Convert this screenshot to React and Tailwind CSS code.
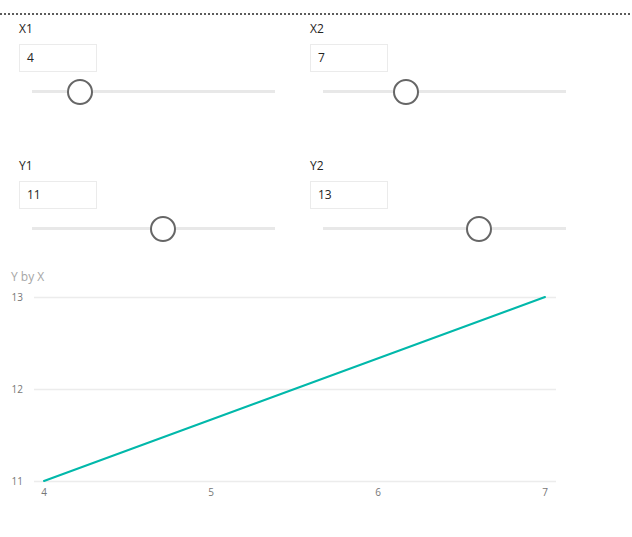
import React from "react";

const TRACK_W = 243;

function Slicer({ label, value, pos }) {
  return (
    <div className="flex flex-col w-[256px]">
      <div className="h-[16px] text-[12px] leading-[16px] text-[#252423]">{label}</div>
      <div className="mt-[7px] w-[78px] h-[28px] border border-[#ebebeb] flex items-center pl-[7px] text-[12px] text-[#252423]">
        {value}
      </div>
      <div className="relative ml-[13px] mt-[6px] h-[28px]" style={{ width: TRACK_W }}>
        <div className="absolute left-0 right-0 top-[12px] h-[3px] bg-[#e8e8e8]" />
        <div
          className="absolute top-[1px] w-[26px] h-[26px] rounded-full border-2 border-[#666666] bg-white"
          style={{ left: pos - 13 }}
        />
      </div>
    </div>
  );
}

function Chart() {
  const xs = [
    { v: "4", x: 44 },
    { v: "5", x: 211 },
    { v: "6", x: 378 },
    { v: "7", x: 545 },
  ];
  const ys = [
    { v: "13", y: 10 },
    { v: "12", y: 102 },
    { v: "11", y: 194 },
  ];
  return (
    <svg width="632" height="230" className="block" fontFamily="'Open Sans', 'Liberation Sans', sans-serif">
      {ys.map((t) => (
        <g key={t.v}>
          <line x1="34" x2="556" y1={t.y + 0.5} y2={t.y + 0.5} stroke="#ececec" strokeWidth="1.5" />
          <text x="23" y={t.y + 4} textAnchor="end" fontSize="10" fill="#777777">
            {t.v}
          </text>
        </g>
      ))}
      {xs.map((t) => (
        <text key={t.v} x={t.x} y={209} textAnchor="middle" fontSize="10" fill="#777777">
          {t.v}
        </text>
      ))}
      <line x1="44" y1="194" x2="545" y2="10" stroke="#01B8AA" strokeWidth="2" strokeLinecap="round" />
    </svg>
  );
}

export default function App() {
  return (
    <div className="w-[632px] h-[537px] bg-white overflow-hidden font-['Open_Sans','Liberation_Sans',sans-serif]">
      <div className="pt-[13px]">
        <div className="h-[2px] w-[631px] bg-[repeating-linear-gradient(90deg,#5c5c5c_0_2px,transparent_2px_4px)]" />
      </div>
      <div className="mt-[6px] pl-[19px] grid grid-cols-[291px_256px] gap-y-[52px]">
        <Slicer label="X1" value="4" pos={48} />
        <Slicer label="X2" value="7" pos={83} />
        <Slicer label="Y1" value="11" pos={131} />
        <Slicer label="Y2" value="13" pos={156} />
      </div>
      <div className="mt-[26px] pl-[11px] h-[16px] text-[12px] leading-[16px] text-[#a6a6a6]">Y by X</div>
      <div className="mt-[2px]">
        <Chart />
      </div>
    </div>
  );
}
